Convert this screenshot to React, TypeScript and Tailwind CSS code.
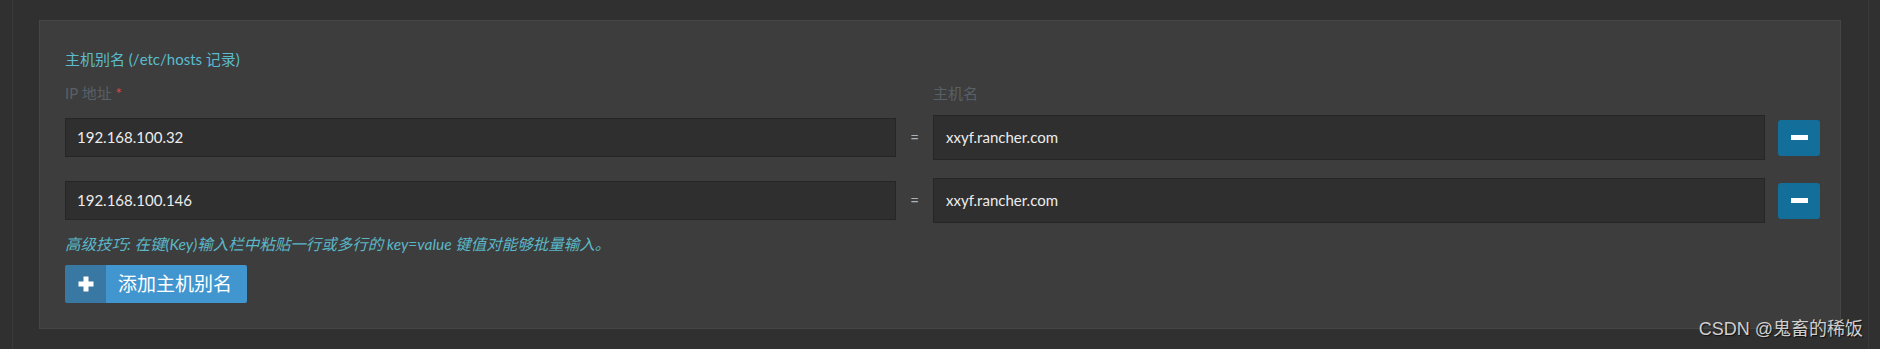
import React from "react";

const font = { fontFamily: "Lato, 'Noto Sans CJK SC', 'Noto Sans', sans-serif" };

function MinusButton() {
  return (
    <button className="ml-[13px] flex h-[36px] w-[42px] shrink-0 items-center justify-center rounded-[3px] bg-[#136e9a]">
      <span className="block h-[5px] w-[17px] bg-white" />
    </button>
  );
}

function Row({ ip, host }: { ip: string; host: string }) {
  return (
    <div className="flex h-[45px] items-center">
      <div className="flex h-[39px] flex-1 items-center border border-[#262626] bg-[#2f2f2f] pl-[11px] text-[15px] text-[#ececec]">
        {ip}
      </div>
      <div className="w-[37px] shrink-0 text-center text-[15px] text-[#a9b3bb]">=</div>
      <div className="flex h-[45px] flex-1 items-center border border-[#262626] bg-[#2f2f2f] pl-[12px] text-[15px] text-[#ececec]">
        {host}
      </div>
      <MinusButton />
    </div>
  );
}

export default function App() {
  return (
    <div className="relative flex h-[349px] w-[1880px] overflow-hidden bg-[#303030]" style={font}>
      <div className="w-[12px] shrink-0" />
      <div className="flex flex-1 border-l border-[#3a3a3a] pl-[26px] pr-[27px] pt-[20px]">
        <div className="flex h-[309px] flex-1 flex-col border border-[#464646] bg-[#3d3d3d] pl-[25px] pr-[20px] pt-[27px]">
          <div className="h-[22px] text-[15px] leading-[22px] text-[#5bbccd]">主机别名 (/etc/hosts 记录)</div>
          <div className="mt-[13px] flex h-[20px] text-[15px] leading-[20px] text-[#586067]">
            <div className="w-[868px]">
              IP 地址 <span className="text-[#e04848]">*</span>
            </div>
            <div>主机名</div>
          </div>
          <div className="mt-[12px]">
            <Row ip="192.168.100.32" host="xxyf.rancher.com" />
          </div>
          <div className="mt-[18px]">
            <Row ip="192.168.100.146" host="xxyf.rancher.com" />
          </div>
          <div className="mt-[11px] h-[20px] text-[15.5px] italic leading-[20px] text-[#5bb7c8]">
            高级技巧: 在键(Key)输入栏中粘贴一行或多行的 key=value 键值对能够批量输入。
          </div>
          <div className="mt-[11px] flex h-[38px] w-[182px] overflow-hidden rounded-[2px]">
            <div className="flex w-[41px] items-center justify-center bg-[#3a78a4]">
              <svg width="16" height="16" viewBox="0 0 16 16">
                <rect x="5.5" y="0.5" width="5" height="15" fill="#fff" />
                <rect x="0.5" y="5.5" width="15" height="5" fill="#fff" />
              </svg>
            </div>
            <div className="flex flex-1 items-center pl-[12px] text-[19px] text-white bg-[#4296cf]">添加主机别名</div>
          </div>
        </div>
      </div>
      <div className="border-l border-[#3a3a3a] w-[12px] shrink-0" />
      <div
        className="absolute bottom-[6px] right-[17px] text-[18px] text-[#cfcfcf]"
        style={{ fontFamily: "'Liberation Sans', 'Noto Sans CJK SC', sans-serif", textShadow: "1px 1px 1px #111" }}
      >
        CSDN @鬼畜的稀饭
      </div>
    </div>
  );
}
